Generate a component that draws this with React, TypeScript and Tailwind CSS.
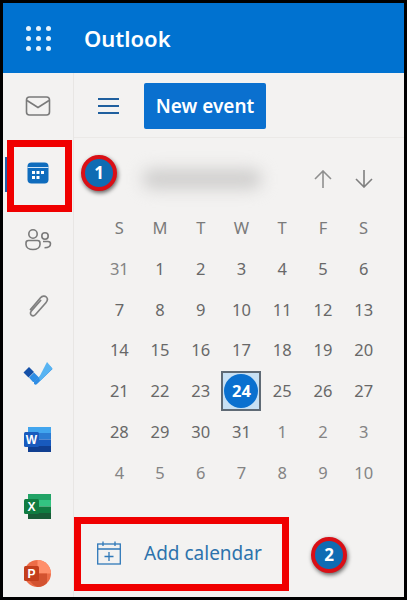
import React from "react";

const F = "font-['Noto_Sans','Open_Sans',sans-serif]";

const weeks = [
  ["31", "1", "2", "3", "4", "5", "6"],
  ["7", "8", "9", "10", "11", "12", "13"],
  ["14", "15", "16", "17", "18", "19", "20"],
  ["21", "22", "23", "24", "25", "26", "27"],
  ["28", "29", "30", "31", "1", "2", "3"],
  ["4", "5", "6", "7", "8", "9", "10"],
];
const heads = ["S", "M", "T", "W", "T", "F", "S"];

function Mail() {
  return (
    <svg width="26" height="22" viewBox="0 0 26 22" fill="none" stroke="#7a7a7a" strokeWidth="1.6">
      <rect x="1.5" y="2" width="23" height="18" rx="3" />
      <path d="M2 5.5l11 7 11-7" />
    </svg>
  );
}
function Cal() {
  return (
    <svg width="22" height="22" viewBox="0 0 22 22">
      <rect x="0.5" y="0.5" width="21" height="21" rx="4" fill="#0f6cbd" />
      <rect x="0.5" y="5" width="21" height="1" fill="#cfe4f7" />
      <g fill="#fff">
        <rect x="5" y="9" width="3" height="3" /><rect x="9.5" y="9" width="3" height="3" /><rect x="14" y="9" width="3" height="3" />
        <rect x="5" y="14" width="3" height="3" /><rect x="9.5" y="14" width="3" height="3" />
      </g>
    </svg>
  );
}
function People() {
  return (
    <svg width="28" height="24" viewBox="0 0 28 24" fill="none" stroke="#7a7a7a" strokeWidth="1.6">
      <circle cx="9" cy="6" r="4.2" />
      <path d="M2 15c0-1.5 1-2.5 2.5-2.5h9c1.5 0 2.5 1 2.5 2.5v1.500c0 3-3 5-7 5s-7-2-7-5z" />
      <circle cx="21" cy="8" r="3.2" />
      <path d="M19 13.500h5c1.300 0 2.500 1 2.500 2.300 0 2.700-2.500 4-6 4" />
    </svg>
  );
}
function Clip() {
  return (
    <svg width="22" height="24" viewBox="0 0 22 24" fill="none" stroke="#808080" strokeWidth="1.7" strokeLinecap="round">
      <path d="M3.500 15.500L13.500 3.800c1.800-2 4.300-2.200 5.800-.8 1.500 1.400 1.300 3.700-.4 5.700L8.500 20.500c-1.200 1.300-3 1.600-4.200.6-1.200-1-1-2.800.1-4.100l9.200-10.500" />
    </svg>
  );
}
function Todo() {
  return (
    <svg width="30" height="24" viewBox="0 0 30 24">
      <path d="M0.500 11.500L6 6l5 5-5.500 5.500z" fill="#1450a8" />
      <path d="M6 16.500l5-5 5 5-4 4c-.8.800-1.700.800-2.500 0z" fill="#2f8de4" />
      <path d="M11 21L27 5l2.500 3L14 23c-1 1-2 .8-3-.2z" fill="#2f8de4" />
      <path d="M16 16.500L24 1l5.500 6.500L17 20z" fill="#58b4f2" />
    </svg>
  );
}
function Office({ letter, a, b, c, d, badge }: { letter: string; a: string; b: string; c: string; d: string; badge: string }) {
  return (
    <svg width="27" height="25" viewBox="0 0 27 25">
      <rect x="4" y="0" width="23" height="6.500" fill={a} />
      <rect x="4" y="6" width="23" height="6.500" fill={b} />
      <rect x="4" y="12.500" width="23" height="6.500" fill={c} />
      <rect x="4" y="19" width="23" height="6" fill={d} />
      <rect x="0" y="5" width="15" height="15" rx="1.500" fill={badge} />
      <text x="7.500" y="16.500" textAnchor="middle" fontSize="12" fontWeight="700" fill="#fff" fontFamily="Liberation Sans, sans-serif">{letter}</text>
    </svg>
  );
}
function Ppt() {
  return (
    <svg width="27" height="27" viewBox="0 0 27 27">
      <circle cx="13.500" cy="13.500" r="13.500" fill="#ed6c47" />
      <path d="M13.500 0A13.500 13.500 0 0 1 27 13.500H13.500z" fill="#ff8f6b" />
      <path d="M4 13.500A13.500 13.500 0 0 0 13.500 27 13.500 13.500 0 0 0 23 23V13.500z" fill="#d35230" />
      <rect x="0" y="6" width="15" height="15" rx="1.500" fill="#c43e1c" />
      <text x="7.500" y="17.500" textAnchor="middle" fontSize="12" fontWeight="700" fill="#fff" fontFamily="Liberation Sans, sans-serif">P</text>
    </svg>
  );
}

function Badge({ n, cls }: { n: string; cls: string }) {
  return (
    <div className={`absolute flex h-[36px] w-[36px] items-center justify-center rounded-full border-[4px] border-[#d90f16] bg-[#0f6cb3] text-[17px] font-bold text-white shadow-[1px_2px_4px_rgba(0,0,0,0.6)] ${cls}`}>
      {n}
    </div>
  );
}

export default function App() {
  const rail = [
    <Mail />,
    <Cal />,
    <People />,
    <Clip />,
    <Todo />,
    <Office letter="W" a="#41a5ee" b="#2b7cd3" c="#185abd" d="#103f91" badge="#185abd" />,
    <Office letter="X" a="#21a366" b="#33c481" c="#107c41" d="#185c37" badge="#107c41" />,
    <Ppt />,
  ];
  return (
    <div className={`relative h-[600px] w-[407px] overflow-hidden bg-black p-[3px] ${F}`}>
      <div className="flex h-full flex-col bg-[#f3f2f1]">
        <header className="flex h-[70px] shrink-0 items-center bg-[#0072d0] text-white">
          <div className="flex w-[70px] justify-center">
            <div className="grid grid-cols-3 gap-[5px]">
              {Array.from({ length: 9 }).map((_, i) => (
                <span key={i} className="h-[5px] w-[5px] rounded-full bg-[#e6f2fb]" />
              ))}
            </div>
          </div>
          <span className="ml-[11px] text-[22px] font-semibold">Outlook</span>
        </header>
        <div className="flex min-h-0 flex-1">
          <aside className="w-[71px] shrink-0 border-r border-[#e8e6e4]">
            {rail.map((icon, i) => (
              <div key={i} className="relative flex h-[66.7px] items-center justify-center pr-[1px]">
                {i === 1 && <span className="absolute left-[2px] top-[17px] h-[35px] w-[2px] bg-[#1f5fa8]" />}
                {icon}
              </div>
            ))}
          </aside>
          <main className="flex min-w-0 flex-1 flex-col">
            <div className="flex h-[65px] shrink-0 items-center border-b border-[#ebe9e7] pt-[2px]">
              <div className="flex w-[70px] flex-col items-center gap-[5px] pr-[1px]">
                <span className="h-[2px] w-[21px] bg-[#1f5f9e]" />
                <span className="h-[2px] w-[21px] bg-[#1f5f9e]" />
                <span className="h-[2px] w-[21px] bg-[#1f5f9e]" />
              </div>
              <button className="h-[46px] w-[122px] rounded-[2px] bg-[#0a70cf] text-[19px] font-semibold text-white">New event</button>
            </div>
            <div className="flex h-[70px] shrink-0 items-center pl-[68px] pr-[31px] pt-[12px]">
              <div className="h-[20px] w-[120px] rounded-full bg-[#cfcecd] blur-[8px]" />
              <div className="ml-auto flex gap-[23px]">
                <svg width="18" height="18" viewBox="0 0 18 18" fill="none" stroke="#8f8f8f" strokeWidth="1.6"><path d="M9 18V1.500M1 9l8-8 8 8" /></svg>
                <svg width="18" height="18" viewBox="0 0 18 18" fill="none" stroke="#7f7f7f" strokeWidth="1.6"><path d="M9 0v16.500M1 9l8 8 8-8" /></svg>
              </div>
            </div>
            <div className="grid grid-cols-7 pl-[25px] pr-[20px] text-[16.5px] leading-none text-[#666]">
              {heads.map((h, i) => (
                <div key={i} className="flex h-[41px] items-center justify-center text-[#7a7a7a]">{h}</div>
              ))}
              {weeks.flatMap((row, r) =>
                row.map((d, c) => {
                  const today = r === 3 && c === 3;
                  const muted = r === 0 ? c === 0 : (r === 4 && c >= 4) || r === 5;
                  return (
                    <div key={`${r}-${c}`} className="flex h-[40.7px] items-center justify-center">
                      {today ? (
                        <div className="flex h-[40px] w-[40px] items-center justify-center border-[2px] border-[#5f6a75] bg-[#c7e0f4]">
                          <span className="flex h-[34px] w-[34px] items-center justify-center rounded-full bg-[#0a70cf] font-bold text-white">{d}</span>
                        </div>
                      ) : (
                        <span className={muted ? "text-[#848484]" : "text-[#686868]"}>{d}</span>
                      )}
                    </div>
                  );
                })
              )}
            </div>
            <div className="mt-auto flex h-[74px] shrink-0 items-center pb-[14px] pl-[23px]">
              <svg width="24" height="24" viewBox="0 0 24 24" fill="none" stroke="#2f78b8" strokeWidth="1.300">
                <rect x="0.700" y="3" width="22.600" height="20" />
                <path d="M0.700 8h22.600M6 0.500V5M18 0.500V5M12 11v9M7.500 15.500h9" />
              </svg>
              <span className="ml-[23px] text-[19px] text-[#2d72ac]">Add calendar</span>
            </div>
          </main>
        </div>
      </div>
      <div className="absolute left-[7px] top-[140px] h-[72px] w-[65px] border-[7px] border-[#f00000]" />
      <div className="absolute left-[74px] top-[517px] h-[74px] w-[215px] border-[7px] border-[#f00000]" />
      <Badge n="1" cls="left-[81px] top-[155px]" />
      <Badge n="2" cls="left-[311px] top-[537px]" />
    </div>
  );
}
